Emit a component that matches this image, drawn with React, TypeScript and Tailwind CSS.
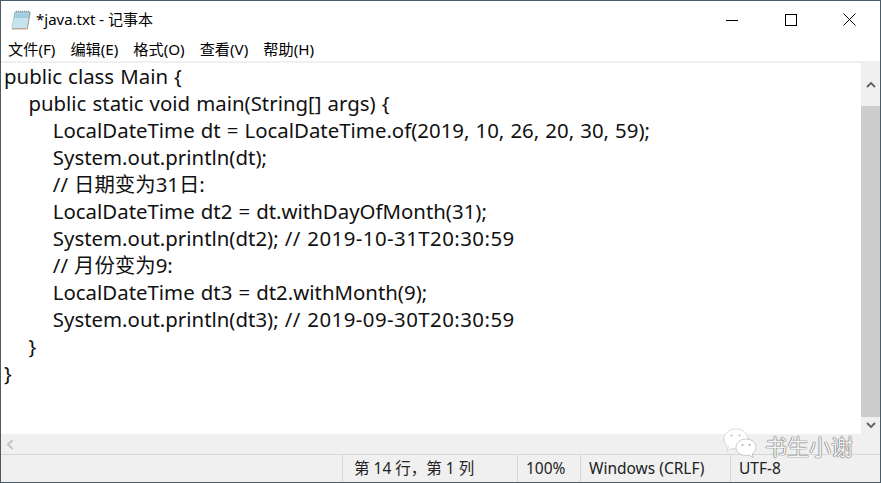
const codeLines = [
  'public class Main {',
  '    public static void main(String[] args) {',
  '        LocalDateTime dt = LocalDateTime.of(2019, 10, 26, 20, 30, 59);',
  '        System.out.println(dt);',
  '        // 日期变为31日:',
  '        LocalDateTime dt2 = dt.withDayOfMonth(31);',
  '        System.out.println(dt2); // 2019-10-31T20:30:59',
  '        // 月份变为9:',
  '        LocalDateTime dt3 = dt2.withMonth(9);',
  '        System.out.println(dt3); // 2019-09-30T20:30:59',
  '    }',
  '}',
];

const menus = ['文件(F)', '编辑(E)', '格式(O)', '查看(V)', '帮助(H)'];

const uiFont = "font-['Noto_Sans','Noto_Sans_CJK_SC',sans-serif]";

function NotepadIcon() {
  return (
    <svg width="20" height="22" viewBox="0 0 20 22" aria-hidden="true">
      <path d="M4 3h15l-3 16H1Z" fill="#a9d3e4" stroke="#7fa9b8" strokeWidth="0.8" />
      <path d="M3 9h15l-2 10H1Z" fill="#c6e3ee" />
      <path d="M1 19h15l-.4 1.6H.8Z" fill="#b9ae94" />
      <path d="M16 19l3-16 .6 1-3 16-.6.6Z" fill="#9b9482" />
      <path d="M5 2.500h13" stroke="#8b8f92" strokeWidth="1.600" strokeDasharray="1 1" />
      <path d="M5 6h12.500M4.500 8h12.500" stroke="#8fbccd" strokeWidth="0.6" />
    </svg>
  );
}

function WindowButtons() {
  return (
    <div className="flex h-full pr-[1px]">
      <div className="flex w-[58px] items-center justify-center">
        <svg width="12" height="12" viewBox="0 0 12 12" aria-hidden="true">
          <path d="M0 6.500h12" stroke="#000" strokeWidth="1" />
        </svg>
      </div>
      <div className="flex w-[59px] items-center justify-center">
        <svg width="12" height="12" viewBox="0 0 12 12" aria-hidden="true">
          <rect x="0.500" y="0.500" width="11" height="11" fill="none" stroke="#000" strokeWidth="1" />
        </svg>
      </div>
      <div className="flex w-[59px] items-center justify-center">
        <svg width="13" height="13" viewBox="0 0 13 13" aria-hidden="true">
          <path d="M0.500 0.500l12 12M12.500 0.500l-12 12" stroke="#000" strokeWidth="1" />
        </svg>
      </div>
    </div>
  );
}

function Watermark() {
  return (
    <div className="pointer-events-none absolute left-[722px] top-[426px] flex items-center gap-[6px]">
      <svg width="36" height="36" viewBox="0 0 36 36" aria-hidden="true">
        <path d="M13 2C6.500 2 1 6.400 1 12c0 3.200 1.700 5.800 4.500 7.700L4 24l5-2.600c1.300.4 2.600.5 4 .5 6.500 0 12-4.400 12-10S19.500 2 13 2Z" fill="#fff" stroke="#cfcfcf" strokeWidth="0.8" />
        <path d="M23 12c-5.600 0-10 3.700-10 8.300s4.400 8.300 10 8.300c1.100 0 2.200-.2 3.200-.4l4 2.300-1.100-3.600c2.400-1.500 3.900-4 3.900-6.600 0-4.600-4.400-8.300-10-8.300Z" fill="#fff" stroke="#bdbdbd" strokeWidth="0.8" />
        <circle cx="8.500" cy="8.500" r="1.100" fill="#c4c4c4" />
        <circle cx="16.500" cy="8.500" r="1.100" fill="#c4c4c4" />
        <circle cx="19.500" cy="18" r="1" fill="#a8a8a8" />
        <circle cx="26.500" cy="18" r="1" fill="#a8a8a8" />
      </svg>
      <span className="text-[22px] leading-none text-[#f4f4f4] [font-family:'Noto_Sans_CJK_SC',sans-serif] [text-shadow:0_0_1px_#444,0_0_1px_#444]">
        书生小谢
      </span>
    </div>
  );
}

function CodeLine({ line }: { line: string }) {
  // the printed dates run a bit wider than the rest of the line
  const at = line.indexOf('// 2019');
  if (at < 0) return <div className="h-[27px]">{line}</div>;
  return (
    <div className="h-[27px]">
      {line.slice(0, at)}
      <span className="tracking-[0.45px]">{line.slice(at)}</span>
    </div>
  );
}

export default function App() {
  return (
    <div className={`relative flex h-[483px] w-[881px] flex-col overflow-hidden border border-[#4a5a66] bg-white text-black ${uiFont}`}>
      <div className="flex h-[37px] shrink-0 items-center justify-between">
        <div className="flex items-center gap-[5px] pl-[10px]">
          <NotepadIcon />
          <span className="text-[15px] leading-none">*java.txt - 记事本</span>
        </div>
        <WindowButtons />
      </div>
      <div className="flex h-[23px] shrink-0 items-center gap-[15px] pl-[7px] text-[15.200px] leading-none">
        {menus.map((m) => (
          <span key={m}>{m}</span>
        ))}
      </div>
      <div className="h-[2px] shrink-0 bg-[#f0f0f0]" />
      <div className="flex min-h-0 flex-1">
        <div className="flex-1 pl-[3px] text-[20.400px] leading-[27px] text-[#111] whitespace-pre [word-spacing:0.8px] [font-family:'Noto_Sans','Noto_Sans_CJK_SC',sans-serif]">
          {codeLines.map((line, i) => (
            <CodeLine key={i} line={line} />
          ))}
        </div>
        <div className="flex w-[19px] shrink-0 flex-col bg-[#f0f0f0]">
          <div className="flex h-[43px] shrink-0 items-center justify-center">
            <svg width="10" height="7" viewBox="0 0 10 7" aria-hidden="true">
              <path d="M1 6l4-4 4 4" fill="none" stroke="#606060" strokeWidth="1.800" />
            </svg>
          </div>
          <div className="flex-1 bg-[#cdcdcd]" />
          <div className="flex h-[17px] shrink-0 items-center justify-center">
            <svg width="10" height="7" viewBox="0 0 10 7" aria-hidden="true">
              <path d="M1 1l4 4 4-4" fill="none" stroke="#606060" strokeWidth="1.800" />
            </svg>
          </div>
        </div>
      </div>
      <div className="flex h-[20px] shrink-0 items-center bg-[#f0f0f0] pl-[5px]">
        <svg width="8" height="11" viewBox="0 0 8 11" aria-hidden="true">
          <path d="M6.500 1L2 5.500 6.500 10" fill="none" stroke="#c4c4c4" strokeWidth="2" />
        </svg>
      </div>
      <div className="flex h-[28px] shrink-0 items-stretch border-t border-[#d7d7d7] bg-[#f0f0f0] text-[15.500px] text-[#222]">
        <div className="w-[341px]" />
        <div className="flex w-[175px] items-center border-l border-[#d7d7d7] pl-[11px]">第 14 行，第 1 列</div>
        <div className="flex w-[63px] items-center border-l border-[#d7d7d7] pl-[8px]">100%</div>
        <div className="flex w-[150px] items-center border-l border-[#d7d7d7] pl-[8px]">Windows (CRLF)</div>
        <div className="flex flex-1 items-center border-l border-[#d7d7d7] pl-[8px]">UTF-8</div>
      </div>
      <Watermark />
    </div>
  );
}
